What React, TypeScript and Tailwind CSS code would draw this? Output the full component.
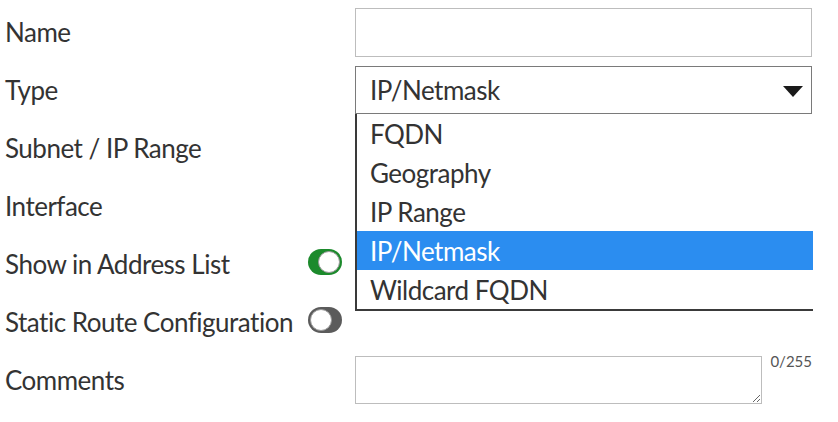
import React from 'react';

const typeOptions = ['FQDN', 'Geography', 'IP Range', 'IP/Netmask', 'Wildcard FQDN'];

function Toggle({ on }: { on: boolean }) {
  return (
    <span
      className={`relative -mt-[4px] inline-flex h-[26px] w-[34px] items-center rounded-full ${
        on ? 'bg-[#1c8a2c] justify-end' : 'bg-[#5b5b5b] justify-start'
      } px-[2px]`}
    >
      <span className="h-[22px] w-[22px] rounded-full bg-white border border-[#9a9a9a]" />
    </span>
  );
}

function Row({ label, toggle, children }: { label: string; toggle?: boolean; children?: React.ReactNode }) {
  return (
    <div className="flex h-[58px] items-center">
      <div className="flex w-[350px] items-center justify-between pr-[13px]">
        <span>{label}</span>
        {toggle !== undefined && <Toggle on={toggle} />}
      </div>
      <div className="relative flex w-[457px] items-center">{children}</div>
    </div>
  );
}

export default function App() {
  return (
    <div className="h-[422px] w-[838px] bg-white pl-[5px] pt-[3px] text-[26px] leading-[30px] text-[#333] font-['Lato','Liberation_Sans',sans-serif] tracking-[-0.5px]">
      <Row label="Name">
        <input className="h-[49px] w-full border border-[#bdbdbd] bg-white outline-none" />
      </Row>

      <Row label="Type">
        <div className="relative h-[48px] w-full">
          <div className="flex h-full items-center justify-between border border-[#7a7a7a] bg-white pl-[14px] pr-[8px]">
            <span>IP/Netmask</span>
            <svg width="20" height="11" viewBox="0 0 20 11" className="mt-[2px]">
              <path d="M0 0 H20 L10 11 Z" fill="#1a1a1a" />
            </svg>
          </div>
          {/* open dropdown list */}
          <ul className="absolute left-0 top-[48px] z-10 w-[458px] border-b-2 border-l-2 border-[#3a3a3a] bg-white">
            {typeOptions.map((opt) => (
              <li
                key={opt}
                className={`flex h-[39px] items-center pl-[13px] ${
                  opt === 'IP/Netmask' ? 'bg-[#2b8df0] text-white' : ''
                }`}
              >
                {opt}
              </li>
            ))}
          </ul>
        </div>
      </Row>

      <Row label="Subnet / IP Range" />
      <Row label="Interface" />
      <Row label="Show in Address List" toggle={true} />
      <Row label="Static Route Configuration" toggle={false} />

      <Row label="Comments">
        <textarea className="h-[48px] w-[410px] border border-[#bdbdbd] bg-white outline-none" />
        <span className="ml-[8px] self-start -mt-[4px] text-[15px] leading-[18px] tracking-normal text-[#555]">0/255</span>
      </Row>
    </div>
  );
}
